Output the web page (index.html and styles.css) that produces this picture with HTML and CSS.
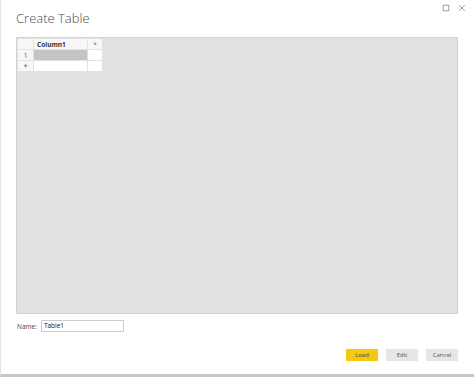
FILE: index.html
```html
<!DOCTYPE html>
<html lang="en">
<head>
  <meta charset="utf-8">
  <title>Create Table</title>
  <link rel="stylesheet" href="styles.css">
</head>
<body>
  <div class="dialog">
    <div class="titlebar">
      <div class="title">Create Table</div>
      <div class="windowbtns">
        <button class="windowbtn" title="Maximize">
          <svg viewBox="0 0 10 10"><rect x="1.5" y="1.5" width="7" height="7" /></svg>
        </button>
        <button class="windowbtn" title="Close">
          <svg viewBox="0 0 10 10"><line x1="1.5" y1="1.5" x2="8.5" y2="8.5" /><line x1="8.5" y1="1.5" x2="1.5" y2="8.5" /></svg>
        </button>
      </div>
    </div>

    <div class="grid-area">
      <table class="entry-table">
        <tr class="head">
          <td class="rowhead"></td>
          <td class="colhead">Column1</td>
          <td class="addcol">*</td>
        </tr>
        <tr>
          <td class="rowhead">1</td>
          <td class="cell selected"></td>
          <td class="cell"></td>
        </tr>
        <tr>
          <td class="rowhead">*</td>
          <td class="cell"></td>
          <td class="cell"></td>
        </tr>
      </table>
    </div>

    <div class="name-row">
      <label for="tname">Name:</label>
      <div class="name-box">Table1</div>
    </div>

    <div class="actions">
      <button class="btn btn-load">Load</button>
      <button class="btn">Edit</button>
      <button class="btn">Cancel</button>
    </div>
  </div>
</body>
</html>
```

FILE: styles.css
```css
html, body {
  margin: 0; padding: 0;
  background: #fff;
  width: 474px; height: 377px;
  overflow: hidden;
  font-family: 'Open Sans', 'Noto Sans', Arial, sans-serif;
  color: #333;
}
.dialog {
  width: 474px; height: 377px;
  box-sizing: border-box;
  border-left: 1px solid #e6e6e6;
  border-bottom: 3px solid #c6c6c6;
  display: flex; flex-direction: column;
}
.titlebar {
  display: flex; justify-content: space-between; align-items: flex-start;
  height: 37px;
}
.title {
  font-size: 13px;
  font-weight: 300;
  color: #4a4a4a;
  margin: 9px 0 0 15px;
}
.windowbtns {
  display: flex; gap: 6px;
  margin: 3px 7px 0 0;
}
.windowbtn {
  width: 10px; height: 10px;
  padding: 0; border: none; background: none;
  display: flex;
}
.windowbtn svg {
  width: 8px; height: 8px;
  stroke: #8a8a8a; stroke-width: 1; fill: none;
  margin: 1px;
}

.grid-area {
  margin: 0 16px 0 15px;
  height: 277px;
  box-sizing: border-box;
  background: #e1e1e1;
  border: 1px solid #d2d2d2;
}
.entry-table {
  border-collapse: collapse;
  font-size: 6.5px;
  background: #fff;
}
.entry-table td {
  border: 1px solid #e2e2e2;
  padding: 0;
  height: 10px;
}
.entry-table .rowhead {
  width: 15px;
  background: #f7f7f7;
  text-align: center;
  color: #555;
}
.entry-table .colhead {
  width: 54px;
  background: #f7f7f7;
  font-weight: 700;
  padding-left: 3px;
  box-sizing: border-box;
}
.entry-table .addcol {
  width: 14px;
  background: #f7f7f7;
  text-align: center;
  color: #777;
}
.entry-table .cell { background: #fff; height: 10px; }
.entry-table .cell.selected { background: #c4c4c4; }

.name-row {
  display: flex; align-items: center;
  margin: 6px 0 0 16px;
  height: 12px;
}
.name-row label {
  font-size: 6.5px;
  color: #444;
  margin-right: 4px;
}
.name-box {
  width: 83px; height: 12px;
  box-sizing: border-box;
  border: 1px solid #cccccc;
  background: #fff;
  font-size: 6.5px;
  line-height: 10px;
  padding: 0 2px;
  color: #111;
}

.actions {
  display: flex; justify-content: flex-end; gap: 8px;
  margin: 17px 16px 0 0;
}
.btn {
  width: 32px; height: 12px;
  padding: 0;
  border: none;
  background: #e6e6e6;
  font-family: inherit;
  font-size: 6px;
  color: #555;
}
.btn-load { background: #f2c811; color: #444; }
```
